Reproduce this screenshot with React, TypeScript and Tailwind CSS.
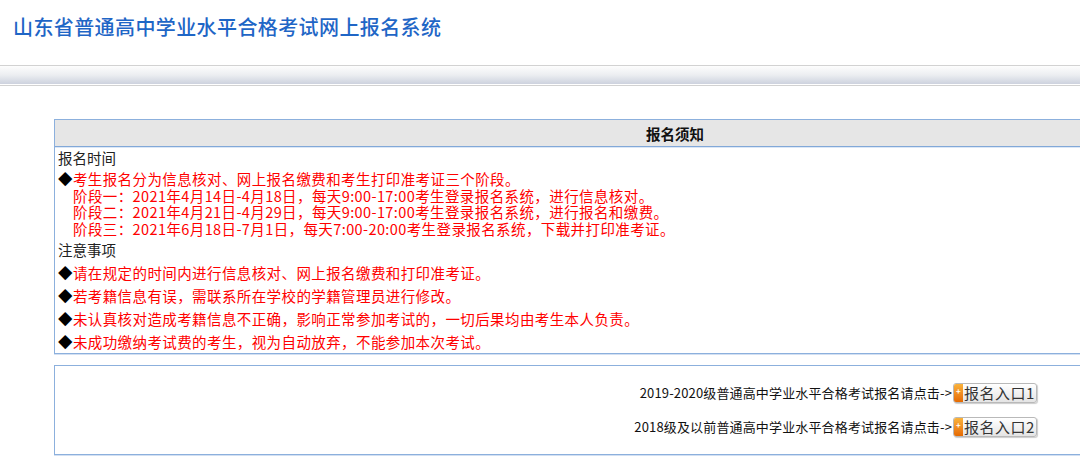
const cjk = "font-['Noto_Sans_CJK_SC',sans-serif]";

const timeLines = [
  "阶段一：2021年4月14日-4月18日，每天9:00-17:00考生登录报名系统，进行信息核对。",
  "阶段二：2021年4月21日-4月29日，每天9:00-17:00考生登录报名系统，进行报名和缴费。",
  "阶段三：2021年6月18日-7月1日，每天7:00-20:00考生登录报名系统，下载并打印准考证。",
];

const notes = [
  "请在规定的时间内进行信息核对、网上报名缴费和打印准考证。",
  "若考籍信息有误，需联系所在学校的学籍管理员进行修改。",
  "未认真核对造成考籍信息不正确，影响正常参加考试的，一切后果均由考生本人负责。",
  "未成功缴纳考试费的考生，视为自动放弃，不能参加本次考试。",
];

const entries = [
  { text: "2019-2020级普通高中学业水平合格考试报名请点击->", label: "报名入口1" },
  { text: "2018级及以前普通高中学业水平合格考试报名请点击->", label: "报名入口2" },
];

function EntryButton({ label }: { label: string }) {
  return (
    <button className="flex h-[20px] w-[84px] items-stretch overflow-hidden rounded-[3px] border border-[#b9b9b9] bg-gradient-to-b from-white to-[#e4e4e4] shadow-[1px_1px_1px_rgba(0,0,0,0.2)]">
      <span className="relative w-[9px] bg-gradient-to-b from-[#f9b23a] to-[#e56a00]">
        <span className="absolute left-[2px] top-[3px] text-[8px] font-bold leading-[8px] text-white">+</span>
      </span>
      <span className="pl-[1px] text-[15px] leading-[18px] tracking-[0.5px] text-[#333]">{label}</span>
    </button>
  );
}

export default function App() {
  return (
    <div className={`w-full min-h-[458px] overflow-hidden bg-white ${cjk}`}>
      <div className="h-[65px] pl-[13px] pt-[13px]">
        <h1 className="text-[20px] font-medium leading-[28px] tracking-[0.4px] text-[#1f66c6]">
          山东省普通高中学业水平合格考试网上报名系统
        </h1>
      </div>

      <div className="border-y border-[#d2d2d2]">
        <div className="h-[18px] bg-gradient-to-b from-[#fdfdfd] via-[#eceef1] to-[#cdd2de]" />
        <div className="h-[1px] bg-white" />
      </div>

      <div className="pl-[54px] pt-[33px]">
        <div className="w-[1242px] border border-[#8cb0dd] shadow-[0_1px_0_#d3e0f2]">
          <div className="h-[27px] border-b border-[#82a8d8] bg-[#e6e6e6] text-center text-[14.5px] font-bold leading-[27px] text-[#111] shadow-[0_1px_0_#dbe7f6]">
            报名须知
          </div>
          <div className="pl-[3px] text-[14.5px]">
            <div className="h-[22px] leading-[22px] text-[#222]">报名时间</div>
            <div className="mt-[2px] leading-[16.5px] tracking-[0.4px] text-[#f00]">
              <div>
                <span className="text-black">◆</span>考生报名分为信息核对、网上报名缴费和考生打印准考证三个阶段。
              </div>
              {timeLines.map((l) => (
                <div key={l} className="pl-[15px]">{l}</div>
              ))}
            </div>
            <div className="mt-[2px] h-[22px] leading-[22px] text-[#222]">注意事项</div>
            {notes.map((n) => (
              <div key={n} className="leading-[23px] tracking-[0.4px] text-[#f00]">
                <span className="text-black">◆</span>{n}
              </div>
            ))}
          </div>
        </div>

        <div className="mt-[11px] w-[1242px] border border-[#8cb0dd] pb-[10px] pr-[258px] pt-[10px] shadow-[0_1px_0_#d3e0f2]">
          {entries.map((e) => (
            <div key={e.label} className="flex h-[34px] items-center justify-end gap-[1px]">
              <span className="text-[13px] tracking-[0.15px] text-[#111]">{e.text}</span>
              <EntryButton label={e.label} />
            </div>
          ))}
        </div>
      </div>
    </div>
  );
}
